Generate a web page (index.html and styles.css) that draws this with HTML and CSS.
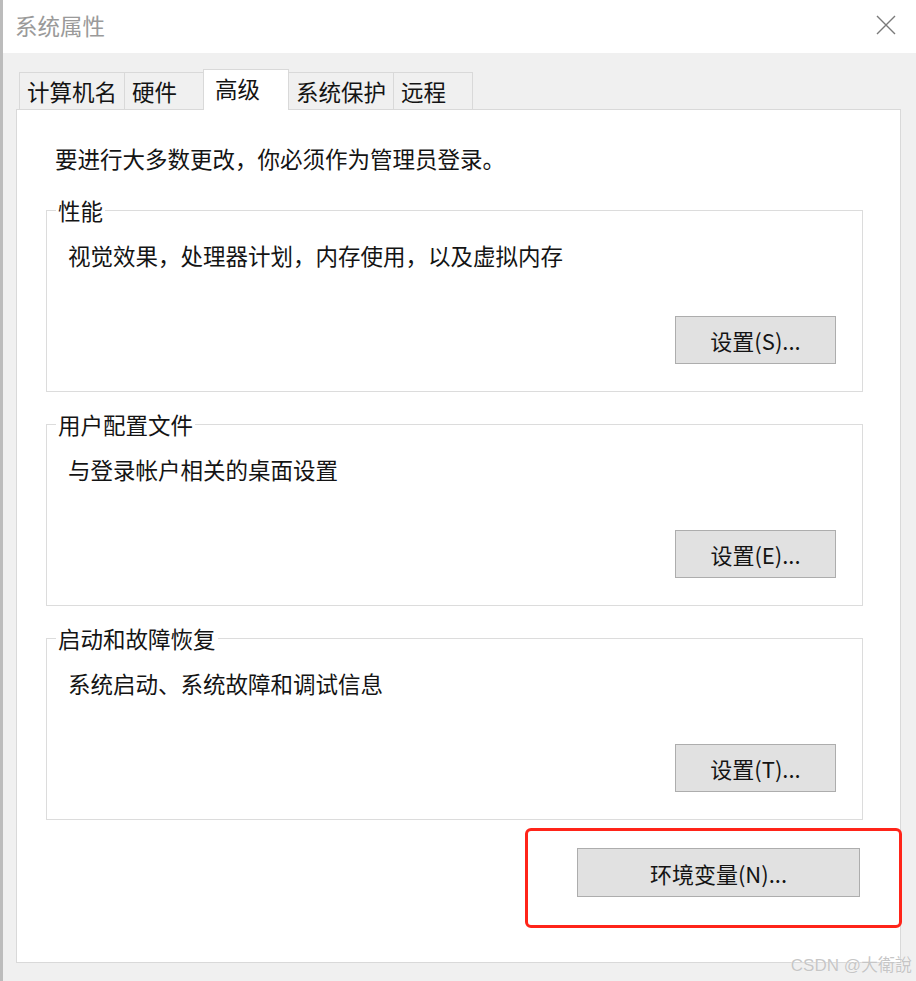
FILE: index.html
```html
<!doctype html>
<html lang="zh-CN">

<head>
  <meta charset="utf-8">
  <title>系统属性</title>
  <meta name="viewport" content="width=device-width, initial-scale=1">
  <link rel="stylesheet" href="styles.css">
</head>

<body>
  <div class="window">
    <div class="titlebar">
      <span class="title">系统属性</span>
      <svg class="close" width="20" height="20" viewBox="0 0 20 20">
        <path d="M1 1 L19 19 M19 1 L1 19" stroke="#7a7a7a" stroke-width="1.4" fill="none" />
      </svg>
    </div>

    <div class="client">
      <div class="tabs">
        <div class="tab">计算机名</div>
        <div class="tab">硬件</div>
        <div class="tab active">高级</div>
        <div class="tab">系统保护</div>
        <div class="tab">远程</div>
      </div>

      <div class="panel">
        <p class="intro">要进行大多数更改，你必须作为管理员登录。</p>

        <fieldset class="group">
          <legend>性能</legend>
          <p class="desc">视觉效果，处理器计划，内存使用，以及虚拟内存</p>
          <div class="actions"><button class="btn">设置(S)...</button></div>
        </fieldset>

        <fieldset class="group">
          <legend>用户配置文件</legend>
          <p class="desc">与登录帐户相关的桌面设置</p>
          <div class="actions"><button class="btn">设置(E)...</button></div>
        </fieldset>

        <fieldset class="group">
          <legend>启动和故障恢复</legend>
          <p class="desc">系统启动、系统故障和调试信息</p>
          <div class="actions"><button class="btn">设置(T)...</button></div>
        </fieldset>

        <div class="env-row">
          <div class="env-wrap">
            <button class="btn btn-env">环境变量(N)...</button>
            <div class="mark"></div>
          </div>
        </div>
      </div>
    </div>

    <div class="watermark">CSDN @大衛說</div>
  </div>
</body>

</html>
```

FILE: styles.css
```css
* {
  box-sizing: border-box;
}

body {
  margin: 0;
  background: #f0f0f0;
  font-family: "Microsoft YaHei", "Noto Sans CJK SC", "Noto Sans CJK TC", sans-serif;
  font-size: 22.5px;
  color: #141414;
}

.window {
  position: relative;
  display: flex;
  flex-direction: column;
  height: 100vh;
  border-left: 3px solid #bcbcbc;
  overflow: hidden;
}

.titlebar {
  height: 53px;
  flex: none;
  background: #fff;
  display: flex;
  align-items: center;
  justify-content: space-between;
  padding: 0 20px 4px 12px;
}

.title {
  color: #9a9a9a;
  line-height: 30px;
}

.client {
  flex: 1;
  display: flex;
  flex-direction: column;
  padding: 16px 15px 18px 13px;
  background: #f0f0f0;
}

.tabs {
  display: flex;
  align-items: flex-end;
  padding-left: 3px;
}

.tab {
  height: 37px;
  min-width: 80px;
  padding: 0 7px;
  line-height: 36px;
  background: #f0f0f0;
  border: 1px solid #d9d9d9;
  border-bottom: none;
  margin-left: -1px;
  white-space: nowrap;
}

.tab:first-child {
  margin-left: 0;
}

.tab.active {
  position: relative;
  z-index: 1;
  height: 41px;
  min-width: 86px;
  padding: 0 11px;
  line-height: 36px;
  background: #fff;
  margin-bottom: -1px;
}

.panel {
  flex: 1;
  background: #fff;
  border: 1px solid #d9d9d9;
  padding: 33px 37px 0 29px;
}

.intro {
  margin: 0 0 22px 9px;
  line-height: 30px;
}

.group {
  margin: 0;
  padding: 0 26px 27px 21px;
  border: 1px solid #dcdcdc;
  min-width: 0;
}

.group + .group {
  margin-top: 17px;
}

.group legend {
  padding: 0 2px;
  margin-left: -12px;
  line-height: 30px;
}

.desc {
  margin: 15px 0 46px 0;
  line-height: 30px;
}

.actions {
  display: flex;
  justify-content: flex-end;
}

.btn {
  width: 161px;
  height: 48px;
  font-family: inherit;
  font-size: 22px;
  color: #141414;
  background: #e1e1e1;
  border: 1px solid #adadad;
  border-radius: 0;
  padding: 0;
}

.env-row {
  display: flex;
  justify-content: flex-end;
  margin-top: 28px;
  padding-right: 3px;
}

.env-wrap {
  position: relative;
}

.btn-env {
  width: 283px;
  height: 49px;
}

/* red annotation box drawn over the dialog */
.mark {
  position: absolute;
  top: -20px;
  left: -52px;
  right: -42px;
  bottom: -31px;
  border: 3.5px solid #ff2419;
  border-radius: 6px;
  pointer-events: none;
}

.watermark {
  position: absolute;
  right: 4px;
  bottom: 3px;
  font-family: "Liberation Sans", "Noto Sans CJK TC", sans-serif;
  font-size: 17px;
  line-height: 24px;
  color: #c6c6c6;
  text-shadow: 0 0 1px #fff;
}
```
